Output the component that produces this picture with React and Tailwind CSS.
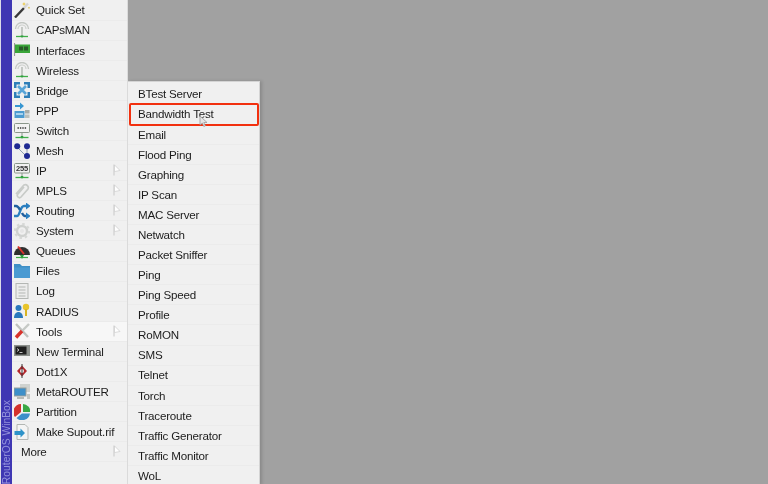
const box = "1 1 16 16";

const icons = {
  quick: (
    <svg width="16" height="16" viewBox={box} fill="none">
      <path d="M2 16.500 11 7" stroke="#3a3a3a" strokeWidth="2.400" />
      <path d="M11 7l4-4.500" stroke="#d4d4d4" strokeWidth="2.400" />
      <path d="M11 1l.6 1.500L13 3l-1.400.6L11 5l-.6-1.400L9 3l1.400-.5z" fill="#e9c53a" />
      <path d="M16 5.500l.4.9.9.4-.9.4-.4.9-.4-.9-.9-.4.9-.4z" fill="#d9b52c" />
    </svg>
  ),
  antenna: (
    <svg width="16" height="16" viewBox={box} fill="none">
      <path d="M2.500 8a6.500 6.500 0 0 1 13 0" stroke="#c2c6c2" strokeWidth="1.300" />
      <path d="M5 8a4 4 0 0 1 8 0" stroke="#cdd0cd" strokeWidth="1.200" />
      <path d="M9 6v9" stroke="#a4aca4" strokeWidth="1.200" />
      <path d="M3 15.500h12" stroke="#3fae49" strokeWidth="1.300" />
      <path d="M7.500 14.500h3l-1.500 2.500z" fill="#2f9e3f" />
    </svg>
  ),
  iface: (
    <svg width="16" height="16" viewBox={box} fill="none">
      <path d="M1.500 2v13" stroke="#9a9a9a" strokeWidth="1.200" />
      <rect x="2" y="3.500" width="15" height="8.500" fill="#3aa63a" />
      <rect x="6" y="5.500" width="4" height="4" fill="#2a5a2a" />
      <rect x="11" y="5.500" width="4" height="4" fill="#2a5a2a" />
    </svg>
  ),
  bridge: (
    <svg width="16" height="16" viewBox={box} fill="none">
      <path d="M5 5l8 8M13 5l-8 8" stroke="#58a5d8" strokeWidth="2.600" />
      <path d="M1 1h6v2.500H3.500V7H1zM17 1h-6v2.500h3.500V7H17zM1 17h6v-2.500H3.500V11H1zM17 17h-6v-2.500h3.500V11H17z" fill="#2f7fb8" />
    </svg>
  ),
  ppp: (
    <svg width="16" height="16" viewBox={box} fill="none">
      <path d="M2 4h5V1.500L11 5 7 8.500V6H2z" fill="#3796d1" />
      <rect x="1.500" y="10" width="10" height="7" fill="#4c9bd0" />
      <rect x="3" y="12" width="7" height="2" fill="#a9d3ee" />
      <rect x="12" y="9" width="4.500" height="3.500" fill="#a8aca8" />
      <rect x="12" y="13.500" width="4.500" height="3.500" fill="#bcc0bc" />
    </svg>
  ),
  sw: (
    <svg width="16" height="16" viewBox={box} fill="none">
      <rect x="1.500" y="1.500" width="15" height="9" rx="1" fill="#f2f2f2" stroke="#8a968a" />
      <path d="M4.500 6h9" stroke="#333" strokeWidth="1.500" strokeDasharray="1.400 1" />
      <path d="M9 10.500v4.500" stroke="#8a968a" />
      <path d="M2.500 15.500h13" stroke="#3fae49" strokeWidth="1.300" />
      <path d="M7.500 14h3l-1.500 3z" fill="#2f9e3f" />
    </svg>
  ),
  mesh: (
    <svg width="16" height="16" viewBox={box} fill="none">
      <path d="M4 5l9 9M14 4v10" stroke="#8fa0b0" strokeWidth="1" />
      <circle cx="4.200" cy="4.200" r="3" fill="#1f2a92" />
      <circle cx="14" cy="4.200" r="3" fill="#1f2a92" />
      <circle cx="14" cy="14" r="3" fill="#1f2a92" />
    </svg>
  ),
  ip: (
    <svg width="16" height="16" viewBox={box} fill="none">
      <rect x="1.500" y="1.500" width="15" height="9.500" rx="1" fill="#f2f2f2" stroke="#8a968a" />
      <text x="9" y="9" textAnchor="middle" fontSize="7.500" fontWeight="700" fill="#333" fontFamily="Liberation Sans, sans-serif">255</text>
      <path d="M9 11v4" stroke="#8a968a" />
      <path d="M2.500 15.500h13" stroke="#3fae49" strokeWidth="1.300" />
      <path d="M7.500 14h3l-1.500 3z" fill="#2f9e3f" />
    </svg>
  ),
  mpls: (
    <svg width="16" height="16" viewBox={box} fill="none">
      <path d="M3 12 11 3a3 3 0 0 1 4 4l-7 8a2 2 0 0 1-3-3l6-7" stroke="#c8cbc8" strokeWidth="1.700" />
    </svg>
  ),
  routing: (
    <svg width="16" height="16" viewBox={box} fill="none">
      <path d="M1 14h3c3 0 3-10 7-10h3" stroke="#2a7fc0" strokeWidth="2.400" />
      <path d="M1 4h2c2 0 3 2 4 4" stroke="#1f5f9e" strokeWidth="2.400" />
      <path d="M9 11c1 2 2 3 3 3h2" stroke="#1f5f9e" strokeWidth="2.400" />
      <path d="M13 0.500 17.500 4 13 7.500zM13 10.500l4.500 3.500-4.500 3.500z" fill="#2a7fc0" />
    </svg>
  ),
  system: (
    <svg width="16" height="16" viewBox={box} fill="none">
      <circle cx="9" cy="9" r="5" stroke="#cfd1cf" strokeWidth="2.400" />
      <circle cx="9" cy="9" r="7" stroke="#d6d8d6" strokeWidth="2.200" strokeDasharray="2.500 3" />
      <circle cx="9" cy="9" r="2" fill="#e6e6e6" />
    </svg>
  ),
  queues: (
    <svg width="16" height="16" viewBox={box} fill="none">
      <path d="M1 13a8 8 0 0 1 16 0z" fill="#2f2f2f" />
      <path d="M5 4.500 11 12" stroke="#d8332c" strokeWidth="2" />
      <path d="M3 15.500h12" stroke="#3fae49" strokeWidth="1.200" />
      <path d="M7 13h4l-2 4z" fill="#2f9e3f" />
    </svg>
  ),
  files: (
    <svg width="16" height="16" viewBox={box} fill="none">
      <path d="M1 2h6l2 2h8v12H1z" fill="#3f8fc6" />
      <path d="M1 5.500h16V16H1z" fill="#4a9ad2" />
    </svg>
  ),
  log: (
    <svg width="16" height="16" viewBox={box} fill="none">
      <rect x="3" y="1.500" width="12" height="15" fill="#ececec" stroke="#b3b6b3" />
      <path d="M5.500 5h7M5.500 8h7M5.500 11h7M5.500 14h7" stroke="#b3b6b3" />
    </svg>
  ),
  radius: (
    <svg width="16" height="16" viewBox={box} fill="none">
      <circle cx="5.500" cy="6" r="3" fill="#2a78bd" />
      <path d="M1 16c0-8 9-8 9 0z" fill="#2a78bd" />
      <circle cx="13" cy="5" r="3.200" fill="#e8c52c" />
      <path d="M12 7h2v7h-2z" fill="#d8b524" />
    </svg>
  ),
  tools: (
    <svg width="16" height="16" viewBox={box} fill="none">
      <path d="M3 2l12 13" stroke="#bfc2bf" strokeWidth="2.400" />
      <path d="M16 2 9 9" stroke="#c6c9c6" strokeWidth="2.400" />
      <path d="M9 9l-6 6.500" stroke="#d8332c" strokeWidth="3.400" />
    </svg>
  ),
  term: (
    <svg width="16" height="16" viewBox={box} fill="none">
      <rect x="1" y="3" width="16" height="11" fill="#8d918d" />
      <rect x="2.500" y="4.500" width="11" height="8" fill="#1e1e1e" />
      <path d="M4 6.500 6 8 4 9.500M6.500 10.500h3" stroke="#eee" strokeWidth=".8" />
    </svg>
  ),
  dot1x: (
    <svg width="16" height="16" viewBox={box} fill="none">
      <path d="M9 3.500 14 9l-5 5.500L4 9z" fill="#b3262c" />
      <circle cx="9" cy="9" r="2" fill="#eee" />
      <path d="M9 2v14" stroke="#3a3a3a" />
    </svg>
  ),
  meta: (
    <svg width="16" height="16" viewBox={box} fill="none">
      <rect x="7" y="1" width="10" height="8" fill="#cfd2cf" />
      <rect x="1" y="5" width="12" height="8" fill="#3d8fc9" stroke="#9a9e9a" />
      <path d="M4 15h7" stroke="#a4a8a4" strokeWidth="1.500" />
      <rect x="14" y="11" width="3" height="5" fill="#c2c5c2" />
    </svg>
  ),
  part: (
    <svg width="16" height="16" viewBox={box} fill="none">
      <path d="M8 1A8 8 0 0 0 2 14L8 9z" fill="#d3322c" />
      <path d="M10 1v8h7.500A8 8 0 0 0 10 1z" fill="#39a845" />
      <path d="M3.500 15A8 8 0 0 0 17 10.500H9z" fill="#3d8fc9" />
    </svg>
  ),
  supout: (
    <svg width="16" height="16" viewBox={box} fill="none">
      <path d="M4 1.500h8l3 3v12H4z" fill="#f4f4f4" stroke="#b3b6b3" />
      <path d="M1.500 8h6V5.500L12 10l-4.500 4.500V12h-6z" fill="#2f93c9" />
    </svg>
  ),
};

const mainItems = [
  { label: "Quick Set", icon: icons.quick },
  { label: "CAPsMAN", icon: icons.antenna },
  { label: "Interfaces", icon: icons.iface },
  { label: "Wireless", icon: icons.antenna },
  { label: "Bridge", icon: icons.bridge },
  { label: "PPP", icon: icons.ppp },
  { label: "Switch", icon: icons.sw },
  { label: "Mesh", icon: icons.mesh },
  { label: "IP", icon: icons.ip, more: true },
  { label: "MPLS", icon: icons.mpls, more: true },
  { label: "Routing", icon: icons.routing, more: true },
  { label: "System", icon: icons.system, more: true },
  { label: "Queues", icon: icons.queues },
  { label: "Files", icon: icons.files },
  { label: "Log", icon: icons.log },
  { label: "RADIUS", icon: icons.radius },
  { label: "Tools", icon: icons.tools, more: true, active: true },
  { label: "New Terminal", icon: icons.term },
  { label: "Dot1X", icon: icons.dot1x },
  { label: "MetaROUTER", icon: icons.meta },
  { label: "Partition", icon: icons.part },
  { label: "Make Supout.rif", icon: icons.supout },
  { label: "More", more: true },
];

const toolItems = [
  "BTest Server",
  "Bandwidth Test",
  "Email",
  "Flood Ping",
  "Graphing",
  "IP Scan",
  "MAC Server",
  "Netwatch",
  "Packet Sniffer",
  "Ping",
  "Ping Speed",
  "Profile",
  "RoMON",
  "SMS",
  "Telnet",
  "Torch",
  "Traceroute",
  "Traffic Generator",
  "Traffic Monitor",
  "WoL",
];

function Flag() {
  return (
    <svg className="absolute right-[6px] top-[3px]" width="8" height="12" viewBox="0 0 8 12" fill="none">
      <path d="M1 0.500v11" stroke="#c8c8c8" />
      <path d="M1.500 1 7 6.500 1.500 7.500z" fill="#ffffff" stroke="#cccccc" strokeWidth=".7" />
    </svg>
  );
}

export default function App() {
  return (
    <div className="relative flex h-[484px] w-[768px] overflow-hidden bg-[#a1a1a1] font-['Liberation_Sans',Arial,sans-serif] text-[11.6px] tracking-[-0.2px] text-[#1c1c1c] blur-[0.4px]">
      <div className="flex h-full w-[128px] shrink-0 bg-[#f0f0f0]">
        <div className="flex h-full w-[12px] shrink-0 items-end justify-center border-l border-[#dcdce8] bg-[#3f37b3]">
          <span className="pb-[1px] text-[10.3px] leading-[10px] tracking-normal text-[#9492dc] [writing-mode:vertical-rl] rotate-180">
            RouterOS WinBox
          </span>
        </div>
        <div className="flex-1 border-r border-[#dcdcdc] pt-[0.5px]">
          {mainItems.map((item) => (
            <div
              key={item.label}
              className={`relative flex h-[20.09px] items-center border-b border-[#ebebeb] ${item.active ? "bg-[#f7f7f7]" : ""}`}
            >
              {item.icon ? (
                <span className="mr-[4px] flex w-[20px] shrink-0 justify-center">{item.icon}</span>
              ) : null}
              <span className={item.icon ? "" : "ml-[9px]"}>{item.label}</span>
              {item.more ? <Flag /> : null}
            </div>
          ))}
        </div>
      </div>

      <div className="absolute left-[128px] top-[81px] h-[404px] w-[132px] border-r border-t border-[#d4d4d4] bg-[#f0f0f0] pt-[2.500px] shadow-[2px_0_3px_rgba(0,0,0,0.15)]">
        {toolItems.map((name) => (
          <div
            key={name}
            className="flex h-[20.08px] items-center border-b border-[#ebebeb] pl-[10px]"
          >
            {name}
          </div>
        ))}
        <div className="absolute left-[1px] top-[21px] h-[23px] w-[130px] rounded-[2px] border-2 border-[#f2300f]" />
        <svg className="absolute left-[71px] top-[33px]" width="10" height="13" viewBox="0 0 10 13" fill="none">
          <path d="M1 1v9l2.300-2 1.500 3.500 1.500-.6L4.800 7.500H8z" fill="#e6e6e6" stroke="#9a9a9a" strokeWidth=".8" />
        </svg>
      </div>
    </div>
  );
}
